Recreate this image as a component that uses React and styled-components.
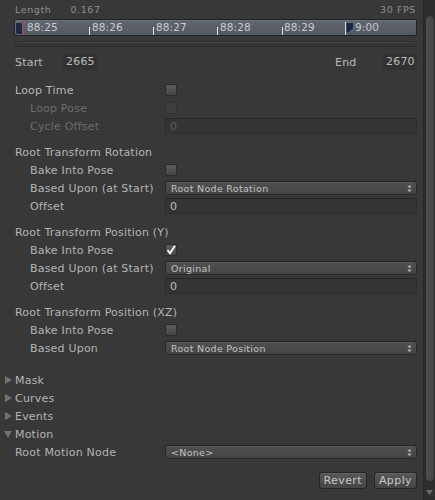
import React from "react";
import styled, { createGlobalStyle } from "styled-components";

const GlobalStyle = createGlobalStyle`
  html, body {
    margin: 0;
    padding: 0;
    background: #383838;
  }
  body {
    font-family: "DejaVu Sans", "Liberation Sans", sans-serif;
    font-size: 11px;
    color: #b4b4b4;
  }
`;

const ticks = [
  { label: "88:25", left: 12 },
  { label: "88:26", left: 77, tick: 74 },
  { label: "88:27", left: 141, tick: 138 },
  { label: "88:28", left: 205, tick: 202 },
  { label: "88:29", left: 269, tick: 267 },
  { label: "9:00", left: 340 },
];

const App = () => {
  return (
    <>
      <GlobalStyle />
      <Page>
        <Content>
          <Header>
            <span className="key">Length</span>
            <span className="value">0.167</span>
            <span className="fps">30 FPS</span>
          </Header>

          <Timeline>
            {ticks.map((t) => (
              <React.Fragment key={t.label}>
                <TickLabel style={{ left: t.left }}>{t.label}</TickLabel>
                {t.tick && <Tick style={{ left: t.tick }} />}
              </React.Fragment>
            ))}
            <StartHandle viewBox="0 0 8 13">
              <path d="M0.5 0.5 H6 L7.5 2 V12.5 H2 L0.5 11 Z" fill="#1c2740" stroke="#5d6b86" />
            </StartHandle>
            <Playhead />
            <EndHandle viewBox="0 0 9 16">
              <path d="M1 0.5 H8.5 V7 L3 11 H1 Z" fill="#1c2740" stroke="#5d6b86" />
              <rect x="0" y="0" width="1" height="16" fill="#d8d8d8" />
            </EndHandle>
          </Timeline>

          <Scrubber />

          <RangeRow>
            <RangeLabel>Start</RangeLabel>
            <RangeField>2665</RangeField>
            <Spacer />
            <RangeLabel>End</RangeLabel>
            <RangeField>2670</RangeField>
          </RangeRow>

          <Section $gap={10}>
            <Row>
              <Label>Loop Time</Label>
              <Checkbox />
            </Row>
            <Row>
              <Label $indent $dim>Loop Pose</Label>
              <Checkbox $dim />
            </Row>
            <Row>
              <Label $indent $dim>Cycle Offset</Label>
              <Field $dim>0</Field>
            </Row>
          </Section>

          <Section $gap={8}>
            <Row>
              <Label $wide>Root Transform Rotation</Label>
            </Row>
            <Row>
              <Label $indent>Bake Into Pose</Label>
              <Checkbox />
            </Row>
            <Row>
              <Label $indent>Based Upon (at Start)</Label>
              <Popup value="Root Node Rotation" />
            </Row>
            <Row>
              <Label $indent>Offset</Label>
              <Field>0</Field>
            </Row>
          </Section>

          <Section $gap={8}>
            <Row>
              <Label $wide>Root Transform Position (Y)</Label>
            </Row>
            <Row>
              <Label $indent>Bake Into Pose</Label>
              <Checkbox $checked>
                <svg viewBox="0 0 12 12" width="12" height="12">
                  <path d="M2.5 6 L5 9.2 L10 1.8" fill="none" stroke="#f2f2f2" strokeWidth="2" />
                </svg>
              </Checkbox>
            </Row>
            <Row>
              <Label $indent>Based Upon (at Start)</Label>
              <Popup value="Original" />
            </Row>
            <Row>
              <Label $indent>Offset</Label>
              <Field>0</Field>
            </Row>
          </Section>

          <Section $gap={8}>
            <Row>
              <Label $wide>Root Transform Position (XZ)</Label>
            </Row>
            <Row>
              <Label $indent>Bake Into Pose</Label>
              <Checkbox />
            </Row>
            <Row>
              <Label $indent>Based Upon</Label>
              <Popup value="Root Node Position" />
            </Row>
          </Section>

          <Section $gap={14}>
            <Foldout label="Mask" />
            <Foldout label="Curves" />
            <Foldout label="Events" />
            <Foldout label="Motion" open />
            <Row>
              <Label>Root Motion Node</Label>
              <Popup value="<None>" />
            </Row>
          </Section>

          <Buttons>
            <Button>Revert</Button>
            <Button>Apply</Button>
          </Buttons>
        </Content>

        <Scrollbar>
          <div className="thumb" />
          <svg className="arrow" viewBox="0 0 7 5" width="7" height="5">
            <path d="M0 0 H7 L3.5 5 Z" fill="#6a6a6a" />
          </svg>
        </Scrollbar>
      </Page>
    </>
  );
};

export default App;

function Popup({ value }) {
  return (
    <Dropdown>
      <span>{value}</span>
      <svg viewBox="0 0 5 9" width="5" height="9">
        <path d="M0.5 3.5 L2.5 0.8 L4.5 3.5 Z M0.5 5.5 L2.5 8.2 L4.5 5.5 Z" fill="#b8b8b8" />
      </svg>
    </Dropdown>
  );
}

function Foldout({ label, open }) {
  return (
    <FoldRow>
      <svg viewBox="0 0 8 8" width="8" height="8">
        {open ? (
          <path d="M0 1 H8 L4 8 Z" fill="#727272" />
        ) : (
          <path d="M1 0 L8 4 L1 8 Z" fill="#727272" />
        )}
      </svg>
      <span>{label}</span>
    </FoldRow>
  );
}

const Page = styled.div`
  display: flex;
  height: 500px;
  overflow: hidden;
`;

const Content = styled.div`
  flex: 1;
  display: flex;
  flex-direction: column;
  padding: 1px 6px 0 15px;
  letter-spacing: 0.2px;
`;

const Header = styled.div`
  display: flex;
  align-items: center;
  height: 17px;
  font-size: 9.5px;
  letter-spacing: 0.6px;
  color: #8e8e8e;

  & > .value {
    margin-left: 19px;
  }
  & > .fps {
    margin-left: auto;
    margin-right: 1px;
  }
`;

const Timeline = styled.div`
  position: relative;
  margin: 1px 0 0 -1px;
  height: 17px;
  box-sizing: border-box;
  border: 1px solid #202226;
  border-radius: 2px;
  background: linear-gradient(#62666e, #53575f);
  box-shadow: inset 0 1px 0 #6e727a;
  overflow: hidden;
`;

const TickLabel = styled.span`
  position: absolute;
  top: 1px;
  font-size: 10.5px;
  letter-spacing: 0.1px;
  color: #c9ccd2;
  line-height: 13px;
`;

const Tick = styled.div`
  position: absolute;
  bottom: 0;
  width: 1px;
  height: 8px;
  background: #e4e4e4;
`;

const StartHandle = styled.svg`
  position: absolute;
  left: 0;
  top: 2px;
  width: 8px;
  height: 13px;
`;

const Playhead = styled.div`
  position: absolute;
  left: 8px;
  top: 0;
  bottom: 0;
  width: 1px;
  background: #c23a34;
`;

const EndHandle = styled.svg`
  position: absolute;
  left: 330px;
  top: 2px;
  width: 9px;
  height: 16px;
`;

const Scrubber = styled.div`
  margin-top: 5px;
  height: 6px;
  box-sizing: border-box;
  border: 1px solid #2b2b2b;
  border-radius: 3px;
  background: #343434;
  box-shadow: inset 0 1px 0 #454545;
`;

const RangeRow = styled.div`
  display: flex;
  align-items: center;
  height: 18px;
  margin-top: 6px;
`;

const RangeLabel = styled.span`
  width: 48px;
  color: #b8b8b8;
`;

const RangeField = styled.div`
  width: 34px;
  height: 16px;
  line-height: 16px;
  box-sizing: border-box;
  padding-left: 3px;
  background: #323232;
  color: #bcbcbc;
`;

const Spacer = styled.div`
  flex: 1;
`;

const Section = styled.div`
  display: flex;
  flex-direction: column;
  margin-top: ${(props) => props.$gap}px;
`;

const Row = styled.div`
  display: flex;
  align-items: center;
  height: 18px;
`;

const Label = styled.span`
  flex: none;
  width: ${(props) => (props.$wide ? "auto" : "150px")};
  box-sizing: border-box;
  padding-left: ${(props) => (props.$indent ? "15px" : "0")};
  white-space: nowrap;
  color: ${(props) => (props.$dim ? "#6c6c6c" : "#b4b4b4")};
`;

const Checkbox = styled.div`
  width: 12px;
  height: 12px;
  box-sizing: border-box;
  border: 1px solid ${(props) => (props.$dim ? "#323232" : "#2a2a2a")};
  border-radius: 2px;
  background: ${(props) =>
    props.$dim ? "#3e3e3e" : "linear-gradient(#5a5a5a, #474747)"};
  display: flex;
  align-items: center;
  justify-content: center;

  & > svg {
    margin: -1px 0 0 0;
    flex: none;
  }
`;

const Field = styled.div`
  flex: 1;
  height: 16px;
  line-height: 15px;
  box-sizing: border-box;
  padding-left: 4px;
  border: 1px solid #2c2c2c;
  border-top-color: #262626;
  border-radius: 1px;
  background: #343434;
  color: ${(props) => (props.$dim ? "#5e5e5e" : "#bcbcbc")};
`;

const Dropdown = styled.div`
  flex: 1;
  display: flex;
  align-items: center;
  justify-content: space-between;
  height: 14px;
  box-sizing: border-box;
  padding: 0 4px 0 5px;
  border: 1px solid #262626;
  border-radius: 3px;
  background: linear-gradient(#505050, #444444);
  box-shadow: inset 0 1px 0 #5a5a5a;
  font-size: 9.5px;
  letter-spacing: 0.3px;
  color: #c2c2c2;

  & > svg {
    flex: none;
  }
`;

const FoldRow = styled.div`
  display: flex;
  align-items: center;
  height: 18px;
  margin-left: -11px;

  & > svg {
    flex: none;
    width: 8px;
    margin: 0 3px 0 0;
  }
`;

const Buttons = styled.div`
  display: flex;
  justify-content: flex-end;
  gap: 7px;
  margin-top: 11px;
`;

const Button = styled.button`
  height: 17px;
  padding: 0 4px;
  box-sizing: border-box;
  border: 1px solid #262626;
  border-radius: 3px;
  background: linear-gradient(#575757, #464646);
  box-shadow: inset 0 1px 0 #626262;
  font-family: "DejaVu Sans", "Liberation Sans", sans-serif;
  font-size: 11px;
  letter-spacing: 0.4px;
  line-height: 14px;
  color: #c6c6c6;
`;

const Scrollbar = styled.div`
  width: 11px;
  flex: none;
  display: flex;
  flex-direction: column;
  align-items: center;
  background: #2e2e2e;
  border-left: 1px solid #262626;

  & > .thumb {
    width: 10px;
    margin-top: 15px;
    height: 467px;
    box-sizing: border-box;
    border: 1px solid #2a2a2a;
    border-radius: 5px;
    background: linear-gradient(90deg, #4e4e4e, #444444);
  }
  & > .arrow {
    margin-top: 8px;
  }
`;
